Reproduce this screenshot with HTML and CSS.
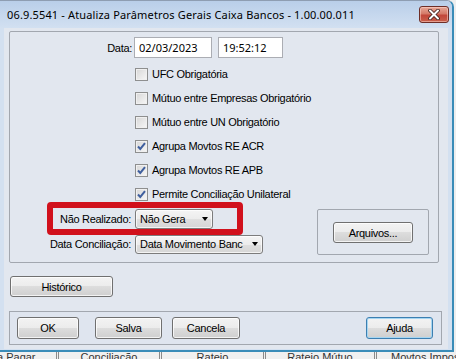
FILE: index.html
```html
<!DOCTYPE html>
<html lang="pt">
<head>
<meta charset="utf-8">
<title>Atualiza Parâmetros Gerais Caixa Bancos</title>
<link rel="stylesheet" href="styles.css">
</head>
<body>
<div class="window">
  <div class="titlebar">
    <span class="title">06.9.5541 - Atualiza Parâmetros Gerais Caixa Bancos - 1.00.00.011</span>
    <span class="close">
      <svg width="12" height="11" viewBox="0 0 12 11">
        <path d="M2 1.5 L10 9.5 M10 1.5 L2 9.5" stroke="#3b1c18" stroke-width="3.6" stroke-linecap="round"/>
        <path d="M2 1.5 L10 9.5 M10 1.5 L2 9.5" stroke="#ffffff" stroke-width="2" stroke-linecap="round"/>
      </svg>
    </span>
  </div>
  <div class="client">
    <div class="group">
      <div class="date-row">
        <span class="lbl">Data:</span>
        <span class="input w-date">02/03/2023</span>
        <span class="input w-time">19:52:12</span>
      </div>
      <div class="checks">
        <div class="check-row"><span class="cb"></span><span>UFC Obrigatória</span></div>
        <div class="check-row"><span class="cb"></span><span>Mútuo entre Empresas Obrigatório</span></div>
        <div class="check-row"><span class="cb"></span><span>Mútuo entre UN Obrigatório</span></div>
        <div class="check-row"><span class="cb"><svg width="11" height="11" viewBox="0 0 11 11"><path d="M2 5.5 L4.3 8 L9 2.2" fill="none" stroke="#3f5f9e" stroke-width="2"/></svg></span><span>Agrupa Movtos RE ACR</span></div>
        <div class="check-row"><span class="cb"><svg width="11" height="11" viewBox="0 0 11 11"><path d="M2 5.5 L4.3 8 L9 2.2" fill="none" stroke="#3f5f9e" stroke-width="2"/></svg></span><span>Agrupa Movtos RE APB</span></div>
        <div class="check-row"><span class="cb"><svg width="11" height="11" viewBox="0 0 11 11"><path d="M2 5.5 L4.3 8 L9 2.2" fill="none" stroke="#3f5f9e" stroke-width="2"/></svg></span><span>Permite Conciliação Unilateral</span></div>
      </div>
      <div class="bottom">
        <div class="sel-rows">
          <div class="sel-row">
            <span class="lbl2">Não Realizado:</span>
            <span class="select sel1"><span>Não Gera</span><span class="arrow"></span></span>
          </div>
          <div class="sel-row">
            <span class="lbl2">Data Conciliação:</span>
            <span class="select sel2"><span>Data Movimento Banc</span><span class="arrow"></span></span>
          </div>
        </div>
        <div class="files">
          <span class="btn btn-files">Arquivos...</span>
        </div>
      </div>
    </div>
    <span class="btn hist">Histórico</span>
    <div class="panel">
      <span class="btn b-ok">OK</span>
      <span class="btn b-salva">Salva</span>
      <span class="btn b-cancela">Cancela</span>
      <span class="btn b-ajuda">Ajuda</span>
    </div>
  </div>
</div>
<div class="tabs">
  <span class="tab t1">a Pagar</span>
  <span class="tab t2">Conciliação</span>
  <span class="tab t3">Rateio</span>
  <span class="tab t4">Rateio Mútuo</span>
  <span class="tab t5">Movtos Impostos</span>
</div>
<div class="highlight"></div>
</body>
</html>
```
FILE: styles.css
```css
* { box-sizing: border-box; }
html, body { margin: 0; padding: 0; }
body {
  width: 456px;
  height: 359px;
  overflow: hidden;
  position: relative;
  background: #eeeeee;
  font-family: "Liberation Sans", Arial, sans-serif;
  font-size: 11px;
  color: #000;
}
.window {
  width: 454px;
  height: 352px;
  background: #d3e0f0;
  border-top: 1px solid #8e9db2;
  border-right: 2px solid #3a8cb8;
  border-bottom: 2px solid #3a8cb8;
  border-top-right-radius: 7px;
  display: flex;
  flex-direction: column;
}
.titlebar {
  height: 27px;
  flex: none;
  display: flex;
  align-items: center;
  justify-content: space-between;
  padding: 0 3px 0 7px;
  background: linear-gradient(#b9cee9, #c8d9ee 60%, #d2e0f1);
  border-top-right-radius: 6px;
}
.title {
  font-family: "Noto Sans", "Open Sans", sans-serif;
  font-size: 11px;
  letter-spacing: 0.15px;
  color: #000;
  white-space: nowrap;
}
.close {
  width: 30px;
  height: 17px;
  border: 1px solid #6e2e27;
  border-radius: 3px;
  background: linear-gradient(#e8a898, #d47a68 45%, #c2473a 55%, #c9604b);
  box-shadow: inset 0 0 0 1px rgba(255, 220, 210, 0.5);
  display: flex;
  align-items: center;
  justify-content: center;
}
.client {
  margin: 0 4px;
  height: 321px;
  background: #e2e7ef;
  display: flex;
  flex-direction: column;
  align-items: flex-start;
}
.group {
  margin: 3px 0 0 5px;
  width: 430px;
  height: 232px;
  border: 1px solid #a2a7af;
  border-radius: 2px;
  padding-top: 5px;
}
.date-row {
  display: flex;
  align-items: center;
  height: 21px;
  margin-bottom: 4px;
  letter-spacing: -0.3px;
}
.lbl {
  width: 122px;
  flex: none;
  text-align: right;
}
.input {
  height: 21px;
  margin-left: 2px;
  border: 1px solid #abadb3;
  background: #fff;
  font-family: "Noto Sans", "Open Sans", sans-serif;
  font-size: 11px;
  letter-spacing: 0;
  line-height: 19px;
  padding-left: 4px;
}
.w-date { width: 78px; }
.w-time { width: 65px; margin-left: 6px; }
.checks { margin-left: 125px; letter-spacing: -0.3px; }
.check-row {
  height: 24px;
  display: flex;
  align-items: center;
  gap: 4px;
}
.cb {
  width: 13px;
  height: 13px;
  flex: none;
  border: 1px solid #8e8f8f;
  background: linear-gradient(135deg, #d6d6d6, #f7f7f7);
  box-shadow: inset 0 0 0 1px #f0f0f0;
  display: flex;
  align-items: center;
  justify-content: center;
}
.bottom {
  display: flex;
  margin-top: 3px;
}
.sel-rows {
  display: flex;
  flex-direction: column;
  gap: 5px;
  letter-spacing: -0.3px;
}
.sel-row {
  display: flex;
  align-items: center;
  height: 20px;
}
.lbl2 {
  width: 121px;
  flex: none;
  text-align: right;
}
.select {
  height: 20px;
  margin-left: 4px;
  border: 1px solid #7c7c7c;
  border-radius: 3px;
  background: linear-gradient(#f4f4f4, #ececec 50%, #dfdfdf 51%, #d6d6d6);
  box-shadow: inset 0 0 0 1px rgba(255, 255, 255, 0.7);
  display: flex;
  align-items: center;
  padding-left: 4px;
  white-space: nowrap;
  overflow: hidden;
}
.sel1 { width: 78px; }
.sel2 { width: 128px; height: 19px; }
.arrow {
  margin-left: auto;
  margin-right: 4px;
  flex: none;
  width: 0;
  height: 0;
  border-left: 3.5px solid transparent;
  border-right: 3.5px solid transparent;
  border-top: 4px solid #000;
}
.files {
  margin-left: auto;
  margin-right: 9px;
  width: 112px;
  height: 46px;
  border: 1px solid #a2a7af;
  border-radius: 2px;
  padding: 12px 0 0 15px;
}
.btn {
  border: 1px solid #707070;
  border-radius: 3px;
  background: linear-gradient(#f3f3f3, #ececec 48%, #dddddd 50%, #cfcfcf);
  box-shadow: inset 0 0 0 1px rgba(255, 255, 255, 0.75);
  display: flex;
  align-items: center;
  justify-content: center;
  letter-spacing: -0.3px;
  flex: none;
}
.btn-files { width: 80px; height: 21px; }
.hist { margin: 13px 0 0 6px; width: 103px; height: 21px; }
.panel {
  margin: 14px 0 0 5px;
  width: 433px;
  height: 34px;
  border: 1px solid #a2a7af;
  background: #dfe5ef;
  display: flex;
  align-items: flex-start;
  padding: 5px 8px 0 7px;
}
.panel .btn { height: 22px; }
.b-ok { width: 62px; }
.b-salva { width: 67px; margin-left: 16px; }
.b-cancela { width: 68px; margin-left: 10px; }
.b-ajuda {
  width: 67px;
  margin-left: auto;
  border-color: #3c7fb1;
  box-shadow: inset 0 0 0 1px #a6d6f2;
}
.tabs {
  height: 7px;
  overflow: hidden;
  display: flex;
  background: #f0f0f0;
  color: #333;
  font-size: 11px;
  line-height: 13px;
}
.tab {
  flex: none;
  margin-top: -1px;
  white-space: nowrap;
  border-right: 3px double #8a8a8a;
}
.t1 { width: 63px; padding-left: 1px; margin-left: -4px; }
.t2 { width: 103px; text-align: center; }
.t3 { width: 104px; text-align: center; }
.t4 { width: 111px; text-align: center; }
.t5 { width: 80px; padding-left: 14px; border-right: none; }
.highlight {
  position: absolute;
  left: 47px;
  top: 202px;
  width: 196px;
  height: 33px;
  border: 6px solid #d1111c;
  border-radius: 4px;
}
```
